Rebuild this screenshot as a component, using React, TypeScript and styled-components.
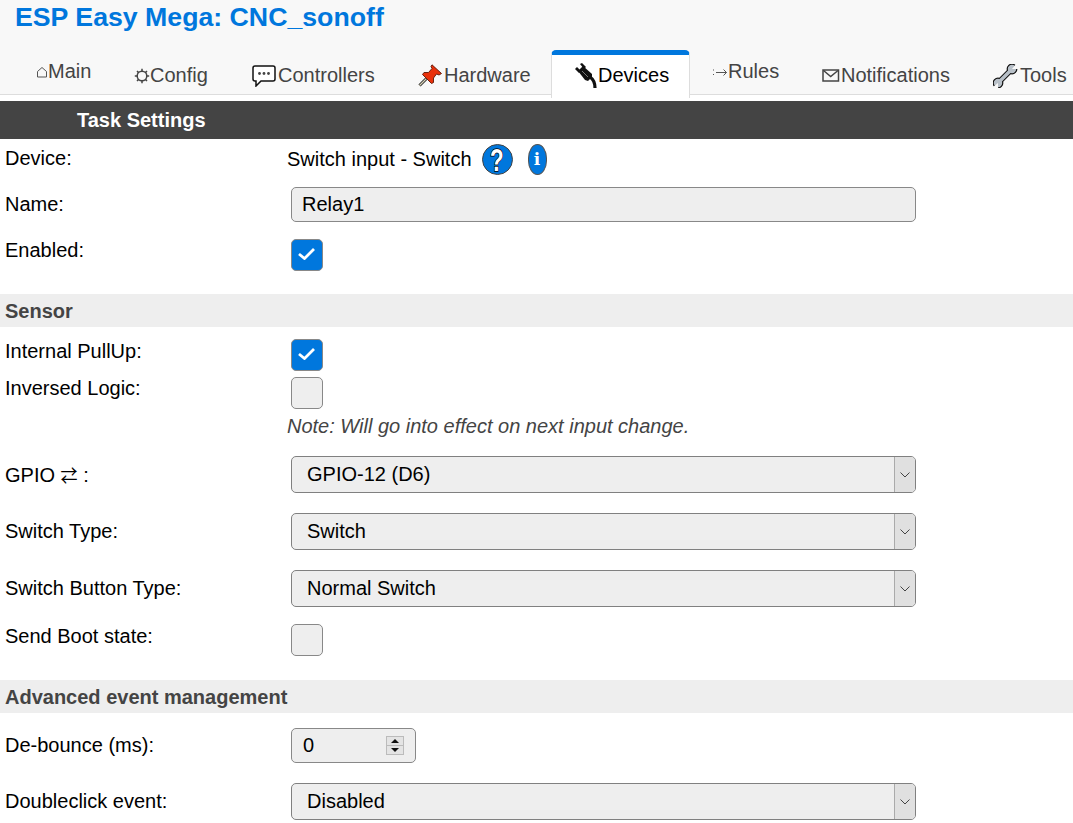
import styled, { createGlobalStyle } from 'styled-components';

const GlobalStyle = createGlobalStyle`
  html, body {
    margin: 0;
    padding: 0;
    overflow: hidden;
    background: #fff;
  }
  body {
    font-family: 'Liberation Sans', Arial, sans-serif;
    font-size: 20px;
    color: #000;
  }
`;

const tabs = [
  { key: 'main', label: 'Main', width: 99, pad: 20, raised: true },
  { key: 'config', label: 'Config', width: 118, pad: 19 },
  { key: 'controllers', label: 'Controllers', width: 166, pad: 19 },
  { key: 'hardware', label: 'Hardware', width: 153, pad: 19 },
  { key: 'devices', label: 'Devices', width: 139, pad: 23, active: true },
  { key: 'rules', label: 'Rules', width: 112, pad: 21, raised: true },
  { key: 'notifications', label: 'Notifications', width: 171, pad: 19 },
  { key: 'tools', label: 'Tools', width: 100, pad: 19 },
];

function HomeIcon() {
  return (
    <svg width="12" height="12" viewBox="0 0 12 12" fill="none" stroke="#555" strokeWidth="1">
      <path d="M1.5 11h9V5.500L6 1.500 1.500 5.500z" />
    </svg>
  );
}

function GearIcon() {
  return (
    <svg width="16" height="16" viewBox="0 0 16 16" fill="none" stroke="#444" strokeWidth="1.500">
      <circle cx="8" cy="8" r="4.800" />
      <path d="M8 .8v2.400M8 12.800v2.400M.8 8h2.400M12.800 8h2.400M3 3l1.400 1.400M11.600 11.600 13 13M3 13l1.400-1.400M11.600 4.400 13 3" />
    </svg>
  );
}

function ChatIcon() {
  return (
    <svg width="26" height="22" viewBox="0 0 26 22">
      <path d="M3 1h18a2 2 0 0 1 2 2v11a2 2 0 0 1-2 2H9l-5 5v-5H3a2 2 0 0 1-2-2V3a2 2 0 0 1 2-2z" fill="#fff" stroke="#111" strokeWidth="1.500" />
      <circle cx="7.500" cy="8.500" r="1.400" fill="#444" />
      <circle cx="12" cy="8.500" r="1.400" fill="#444" />
      <circle cx="16.500" cy="8.500" r="1.400" fill="#444" />
    </svg>
  );
}

function PinIcon() {
  return (
    <svg width="26" height="23" viewBox="0 0 26 23">
      <path d="M1.500 21.500 8.500 14.500" stroke="#222" strokeWidth="3" />
      <path d="M1.500 21.500 8.500 14.500" stroke="#d8d2b8" strokeWidth="1.200" />
      <path d="M14 .8 23.500 9.500 21 11l-2.500-1-3 4v4.500l-2 1-9-9L6 8.500h4.500L14 4.500l-1-2z" fill="#e8300a" stroke="#5a1606" strokeWidth="0.900" strokeLinejoin="round" />
    </svg>
  );
}

function PlugIcon() {
  return (
    <svg width="23" height="25" viewBox="0 0 23 25">
      <path d="M0 6l2-2 4 4-2 2zM5 1l2-1 4 4-2 2z" fill="#111" />
      <path d="M3 8l5-5 9 8v3l-4 4-3-1z" fill="#111" />
      <path d="M7 8l6 6" stroke="#777" strokeWidth="1" />
      <path d="M15 14c3 2 5 5 5 11" fill="none" stroke="#111" strokeWidth="3.200" />
    </svg>
  );
}

function ArrowIcon() {
  return (
    <svg width="16" height="12" viewBox="0 0 16 12" fill="none" stroke="#555" strokeWidth="1">
      <path d="M1.500 3.500v1M1.500 8v1M4 6.500h10.500M11.500 3.500l3 3-3 3" />
    </svg>
  );
}

function MailIcon() {
  return (
    <svg width="19" height="13" viewBox="0 0 19 13" fill="none" stroke="#444" strokeWidth="1.500">
      <rect x="1" y="1" width="15.500" height="11" />
      <path d="M1.500 1.500 8.700 7.500l7.300-6" />
    </svg>
  );
}

function WrenchIcon() {
  return (
    <svg width="27" height="24" viewBox="0 0 27 24">
      <path d="M5 19 19 5" stroke="#111" strokeWidth="5.500" />
      <circle cx="19" cy="5" r="4.800" fill="#b8c0c8" stroke="#111" strokeWidth="1.200" />
      <circle cx="5" cy="19" r="4.800" fill="#b8c0c8" stroke="#111" strokeWidth="1.200" />
      <path d="M5 19 19 5" stroke="#b8c0c8" strokeWidth="3.500" />
      <path d="M19 5l4-5h3v5z" fill="#f8f8f8" />
      <path d="M5 19l-5 4v1h5z" fill="#f8f8f8" />
    </svg>
  );
}

function TabIcon({ name }: { name: string }) {
  if (name === 'main') return <HomeIcon />;
  if (name === 'config') return <GearIcon />;
  if (name === 'controllers') return <ChatIcon />;
  if (name === 'hardware') return <PinIcon />;
  if (name === 'devices') return <PlugIcon />;
  if (name === 'rules') return <ArrowIcon />;
  if (name === 'notifications') return <MailIcon />;
  return <WrenchIcon />;
}

function CheckMark() {
  return (
    <svg width="17" height="12" viewBox="0 0 17 12" fill="none" stroke="#fff" strokeWidth="2.800">
      <path d="M1 6l5.500 4.500L16 1" />
    </svg>
  );
}

function Chevron() {
  return (
    <svg width="10" height="6" viewBox="0 0 10 6" fill="none" stroke="#444" strokeWidth="1">
      <path d="M.5.500 5 5 9.500.500" />
    </svg>
  );
}

function SelectField({ value }: { value: string }) {
  return (
    <SelectBox>
      <SelectValue>{value}</SelectValue>
      <SelectArrow>
        <Chevron />
      </SelectArrow>
    </SelectBox>
  );
}

export default function App() {
  return (
    <Page>
      <GlobalStyle />
      <Header>
        <Title>ESP Easy Mega: CNC_sonoff</Title>
        <TabBar>
          {tabs.map((tab) => (
            <Tab key={tab.key} $width={tab.width} $pad={tab.pad} $active={tab.active} $raised={tab.raised}>
              <TabIcon name={tab.key} />
              {tab.label}
            </Tab>
          ))}
        </TabBar>
      </Header>

      <TableHead>Task Settings</TableHead>

      <Row $height={41}>
        <Label $top={8}>Device:</Label>
        <DeviceValue>
          Switch input - Switch
          <HelpBadge>
            <HelpMark>?</HelpMark>
          </HelpBadge>
          <InfoBadge>i</InfoBadge>
        </DeviceValue>
      </Row>
      <Row $height={46}>
        <Label $top={13}>Name:</Label>
        <TextBox>Relay1</TextBox>
      </Row>
      <Row $height={68}>
        <Label $top={13}>Enabled:</Label>
        <CheckBox $top={13} $checked>
          <CheckMark />
        </CheckBox>
      </Row>

      <SectionHead>Sensor</SectionHead>

      <Row $height={42}>
        <Label $top={13}>Internal PullUp:</Label>
        <CheckBox $top={12} $checked>
          <CheckMark />
        </CheckBox>
      </Row>
      <Row $height={33}>
        <Label $top={8}>Inversed Logic:</Label>
        <CheckBox $top={8} />
      </Row>
      <Note>Note: Will go into effect on next input change.</Note>
      <Row $height={57}>
        <Label $top={8}>
          GPIO <SwapGlyph>⇄</SwapGlyph> :
        </Label>
        <SelectField value="GPIO-12 (D6)" />
      </Row>
      <Row $height={57}>
        <Label $top={7}>Switch Type:</Label>
        <SelectField value="Switch" />
      </Row>
      <Row $height={54}>
        <Label $top={7}>Switch Button Type:</Label>
        <SelectField value="Normal Switch" />
      </Row>
      <Row $height={56}>
        <Label $top={1}>Send Boot state:</Label>
        <CheckBox $top={0} />
      </Row>

      <SectionHead>Advanced event management</SectionHead>

      <Row $height={70}>
        <Label $top={21}>De-bounce (ms):</Label>
        <NumberBox>
          0
          <Spinner>
            <SpinButton $up />
            <SpinButton />
          </Spinner>
        </NumberBox>
      </Row>
      <Row $height={40}>
        <Label $top={7}>Doubleclick event:</Label>
        <SelectField value="Disabled" />
      </Row>
    </Page>
  );
}

const Page = styled.div`
  width: 1073px;
  height: 823px;
  overflow: hidden;
  background: #fff;
`;

const Header = styled.header`
  height: 95px;
  padding-left: 15px;
  box-sizing: border-box;
  background: #f8f8f8;
  border-bottom: 1px solid #ddd;
`;

const Title = styled.h1`
  margin: 0;
  padding-top: 2px;
  font-size: 26.7px;
  line-height: 30px;
  font-weight: 700;
  color: #0077dd;
`;

const TabBar = styled.nav`
  display: flex;
  margin-top: 18px;
`;

const Tab = styled.div<{ $width: number; $pad: number; $active?: boolean; $raised?: boolean }>`
  flex: none;
  display: flex;
  align-items: center;
  box-sizing: border-box;
  width: ${(p) => p.$width}px;
  height: 48px;
  padding-left: ${(p) => p.$pad}px;
  padding-bottom: ${(p) => (p.$raised ? '10px' : '2px')};
  color: ${(p) => (p.$active ? '#000' : '#444')};
  background: ${(p) => (p.$active ? '#fff' : 'transparent')};
  border-top: 5px solid ${(p) => (p.$active ? '#0077dd' : 'transparent')};
  border-left: 1px solid ${(p) => (p.$active ? '#ddd' : 'transparent')};
  border-right: 1px solid ${(p) => (p.$active ? '#ddd' : 'transparent')};
  border-radius: 5px 5px 0 0;
  white-space: nowrap;
  position: relative;
  z-index: 1;
`;

const TableHead = styled.div`
  height: 38px;
  margin-top: 6px;
  padding-left: 77px;
  background: #444;
  color: #fff;
  font-size: 20px;
  font-weight: 700;
  line-height: 38px;
`;

const Row = styled.div<{ $height: number }>`
  display: flex;
  height: ${(p) => p.$height}px;
  padding-left: 5px;
`;

const Label = styled.div<{ $top: number }>`
  width: 286px;
  flex: none;
  padding-top: ${(p) => p.$top}px;
  line-height: 23px;
`;

const SwapGlyph = styled.span`
  font-family: 'Noto Sans CJK SC', 'DejaVu Sans', sans-serif;
  font-size: 17px;
  line-height: 0;
`;

const DeviceValue = styled.div`
  display: flex;
  align-items: center;
  height: 41px;
  margin-left: -4px;
  white-space: nowrap;
`;

const HelpBadge = styled.span`
  display: flex;
  align-items: center;
  justify-content: center;
  width: 31px;
  height: 31px;
  margin-left: 10px;
  box-sizing: border-box;
  border-radius: 50%;
  border: 1px solid #444;
  background: #0077dd;
`;

const HelpMark = styled.span`
  display: block;
  color: #fff;
  font-size: 32px;
  font-weight: 700;
  line-height: 30px;
  transform: scaleX(0.7);
  -webkit-text-stroke: 1.5px #000;
  paint-order: stroke fill;
`;

const InfoBadge = styled.span`
  width: 19px;
  height: 31px;
  margin-left: 15px;
  box-sizing: border-box;
  border-radius: 10px / 15px;
  border: 1px solid #555;
  background: #0077dd;
  color: #fff;
  font-family: 'DejaVu Serif', serif;
  font-size: 17px;
  font-weight: 700;
  line-height: 28px;
  text-align: center;
`;

const TextBox = styled.div`
  width: 625px;
  height: 35px;
  margin-top: 7px;
  padding-left: 10px;
  box-sizing: border-box;
  border: 1px solid #888;
  border-radius: 5px;
  background: #eee;
  line-height: 33px;
`;

const CheckBox = styled.div<{ $top: number; $checked?: boolean }>`
  display: flex;
  align-items: center;
  justify-content: center;
  width: 32px;
  height: 32px;
  box-sizing: border-box;
  margin-top: ${(p) => p.$top}px;
  padding: 0 2px 2px 0;
  border: 1px solid #888;
  border-radius: 5px;
  background: ${(p) => (p.$checked ? '#0077dd' : '#eee')};
`;

const SectionHead = styled.div`
  height: 33px;
  padding-left: 5px;
  background: #eee;
  color: #444;
  font-weight: 700;
  line-height: 34px;
`;

const Note = styled.div`
  height: 54px;
  box-sizing: border-box;
  padding: 6px 0 0 287px;
  color: #444;
  font-style: italic;
  line-height: 36px;
`;

const SelectBox = styled.div`
  display: flex;
  width: 625px;
  height: 37px;
  box-sizing: border-box;
  border: 1px solid #808080;
  border-radius: 5px;
  background: #eee;
  overflow: hidden;
`;

const SelectValue = styled.div`
  flex: 1;
  padding-left: 15px;
  line-height: 35px;
`;

const SelectArrow = styled.div`
  display: flex;
  align-items: center;
  justify-content: center;
  width: 20px;
  background: #e0e0e0;
  border-left: 1px solid #aaa;
`;

const NumberBox = styled.div`
  position: relative;
  width: 125px;
  height: 35px;
  margin-top: 15px;
  padding-left: 11px;
  box-sizing: border-box;
  border: 1px solid #888;
  border-radius: 5px;
  background: #eee;
  line-height: 33px;
`;

const Spinner = styled.div`
  position: absolute;
  top: 7px;
  right: 11px;
  display: flex;
  flex-direction: column;
  width: 18px;
  height: 19px;
  box-sizing: border-box;
  border: 1px solid #bbb;
`;

const SpinButton = styled.div<{ $up?: boolean }>`
  flex: 1;
  display: flex;
  align-items: center;
  justify-content: center;
  background: #e4e4e4;
  &:first-child {
    border-bottom: 1px solid #bbb;
  }
  &::after {
    content: '';
    border-left: 4px solid transparent;
    border-right: 4px solid transparent;
    border-${(p) => (p.$up ? 'bottom' : 'top')}: 4px solid #111;
  }
`;
